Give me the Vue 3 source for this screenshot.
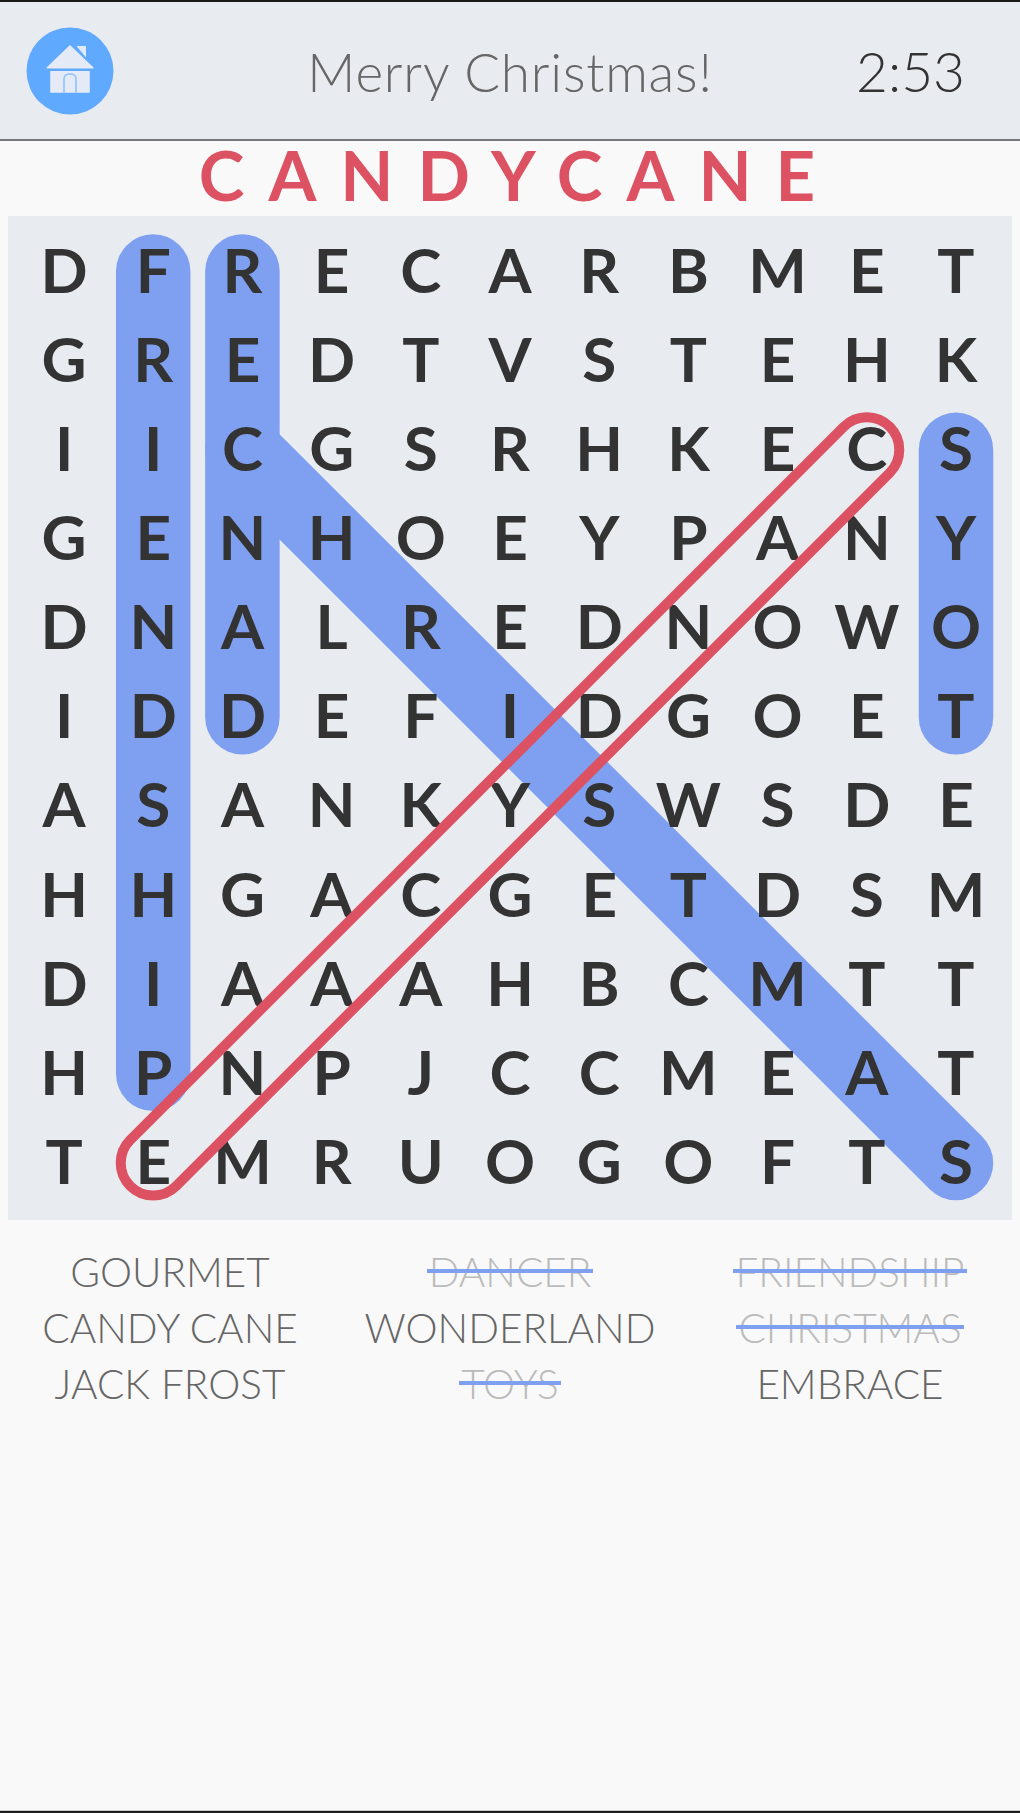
<script setup>
const letters = [
  'DFRECARBMET', 'GREDTVSTEHK', 'IICGSRHKECS', 'GENHOEYPANY', 'DNALREDNOWO', 'IDDEFIDGOET',
  'ASANKYSWSDE', 'HHGACGETDSM', 'DIAAAHBCMTT', 'HPNPJCCMEAT', 'TEMRUOGOFTS'
].map(r => r.split(''))

const words = [
  { t: 'GOURMET' }, { t: 'DANCER', done: true }, { t: 'FRIENDSHIP', done: true },
  { t: 'CANDY CANE' }, { t: 'WONDERLAND' }, { t: 'CHRISTMAS', done: true },
  { t: 'JACK FROST' }, { t: 'TOYS', done: true }, { t: 'EMBRACE' }
]

const cx = c => 56 + 89.2 * c
const cy = r => 55.5 + 89.15 * r
const found = [
  [1, 0, 1, 9], [2, 0, 2, 5], [10, 2, 10, 5], [2, 2, 10, 10]
].map(([a, b, c, d]) => ({ x1: cx(a), y1: cy(b), x2: cx(c), y2: cy(d) }))

const R = 32.5
const n = R * Math.SQRT1_2
const sx = cx(1), sy = cy(10), ex = cx(9), ey = cy(2)
const active = `M${sx - n} ${sy - n}L${ex - n} ${ey - n}A${R} ${R} 0 0 1 ${ex + n} ${ey + n}L${sx + n} ${sy + n}A${R} ${R} 0 0 1 ${sx - n} ${sy - n}Z`
</script>

<template>
  <div class="screen">
    <header class="bar">
      <button class="home" aria-label="Home">
        <svg viewBox="0 0 88 88" width="88" height="88">
          <circle cx="44" cy="44" r="43.500" fill="#5fa9ff" />
          <path d="M44 18 20.500 40.500Q20 41.500 21.500 41.500H66.500Q68 41.500 67.500 40.500Z" fill="#e4ebf6" />
          <path d="M50.500 19H60V30.500Z" fill="#e4ebf6" />
          <path d="M24.200 44H63.800V65Q63.800 65.800 63 65.800H25Q24.200 65.800 24.200 65Z" fill="#e4ebf6" />
          <path d="M38 65.800V52Q38 47 44 47Q50 47 50 52V65.800" fill="none" stroke="#8fc2ff" stroke-width="1.600" />
        </svg>
      </button>
      <div class="name">Merry Christmas!</div>
      <div class="time">2:53</div>
    </header>

    <div class="current">CANDYCANE</div>

    <section class="board">
      <svg class="marks under" viewBox="0 0 1004 1004">
        <line v-for="(l, i) in found" :key="i" :x1="l.x1" :y1="l.y1" :x2="l.x2" :y2="l.y2" />
      </svg>
      <div class="grid">
        <template v-for="(row, r) in letters" :key="r">
          <span v-for="(ch, c) in row" :key="c" class="cell">{{ ch }}</span>
        </template>
      </div>
      <svg class="marks over" viewBox="0 0 1004 1004">
        <path :d="active" />
      </svg>
    </section>

    <ul class="words">
      <li v-for="w in words" :key="w.t"><span class="word" :class="{ done: w.done }">{{ w.t }}</span></li>
    </ul>
  </div>
</template>

<style>
html, body { margin: 0; background: #f9f9f9; }
</style>

<style scoped>
.screen {
  box-sizing: border-box;
  height: 1813px;
  border-top: 2px solid #1a1a1a;
  border-bottom: 2px solid #1a1a1a;
  box-shadow: inset 0 -1px 0 #c9c9c9;
  background: #f9f9f9;
  font-family: Lato, "Liberation Sans", sans-serif;
  overflow: hidden;
}
.bar {
  box-sizing: border-box;
  height: 139px;
  display: grid;
  grid-template-columns: 1fr auto 1fr;
  align-items: center;
  padding: 0 58px;
  background: #e8ebf0;
  border-bottom: 2px solid #77787c;
}
.home {
  width: 88px;
  height: 88px;
  padding: 0;
  border: 0;
  background: none;
  margin-left: -32px;
}
.home svg { display: block; }
.name {
  font-size: 53px;
  letter-spacing: 0.800px;
  font-weight: 300;
  color: #666;
  line-height: 1;
  margin-top: 1px;
}
.time {
  justify-self: end;
  font-size: 55px;
  font-weight: 300;
  color: #333;
  line-height: 1;
  margin-top: 1px;
  margin-right: -3px;
}
.current {
  height: 75px;
  padding-left: 18px;
  line-height: 68px;
  text-align: center;
  font-size: 69px;
  font-weight: 700;
  letter-spacing: 24px;
  color: #dc5262;
}
.board {
  position: relative;
  margin: 0 8px;
  height: 1004px;
  background: #e8ebf0;
}
.marks {
  position: absolute;
  inset: 0;
  width: 1004px;
  height: 1004px;
}
.under line {
  stroke: #7fa0f0;
  stroke-width: 74.500;
  stroke-linecap: round;
}
.over path {
  fill: none;
  stroke: #dc5262;
  stroke-width: 10px;
}
.grid {
  position: relative;
  box-sizing: border-box;
  height: 100%;
  padding: 11px 11.500px;
  display: grid;
  grid-template-columns: repeat(11, 89.200px);
  grid-auto-rows: 89.150px;
}
.cell {
  display: flex;
  align-items: center;
  justify-content: center;
  padding-bottom: 6px;
  box-sizing: border-box;
  font-size: 62px;
  font-weight: 700;
  color: #333;
  line-height: 1;
}
.words {
  list-style: none;
  margin: 0;
  padding: 24px 0 0;
  display: grid;
  grid-template-columns: 340px 340px 340px;
  grid-auto-rows: 56px;
}
.words li {
  text-align: center;
  line-height: 56px;
  font-size: 40.500px;
  font-weight: 300;
  color: #666;
}
.word {
  position: relative;
  display: inline-block;
}
.word.done { color: #bbb; }
.word.done::after {
  content: "";
  position: absolute;
  left: -2px;
  right: -2px;
  top: 50%;
  height: 4px;
  margin-top: -3px;
  background: #7fa0f0;
}
</style>
